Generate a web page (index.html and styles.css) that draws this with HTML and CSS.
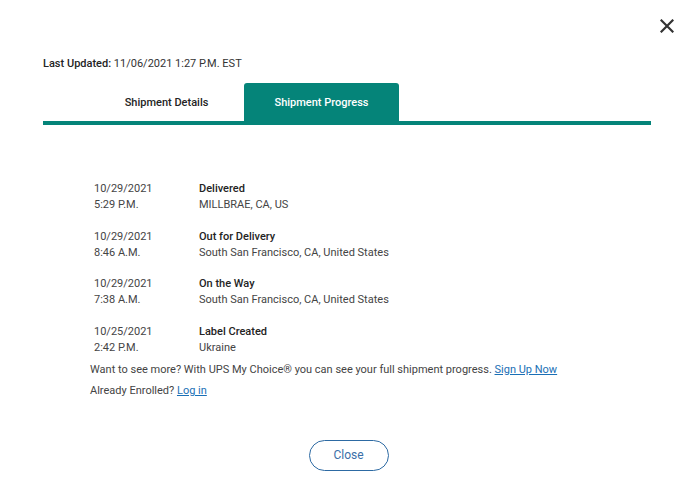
FILE: index.html
```html
<!DOCTYPE html>
<html>
<head>
<meta charset="utf-8">
<link rel="stylesheet" href="styles.css">
</head>
<body>
<div class="modal">
  <div class="top">
    <button class="x" aria-label="Close">
      <svg width="14" height="14" viewBox="0 0 14 14"><path d="M1.5 1.5L12.5 12.5M12.5 1.5L1.5 12.5" stroke="#333" stroke-width="2.2" stroke-linecap="square"/></svg>
    </button>
  </div>
  <div class="updated"><span class="b">Last Updated:</span> 11/06/2021 1:27 P.M. EST</div>
  <div class="tabs">
    <div class="tab">Shipment Details</div>
    <div class="tab active">Shipment Progress</div>
  </div>
  <div class="events">
    <div class="ev"><div class="when">10/29/2021<br>5:29 P.M.</div><div class="what"><span class="b">Delivered</span><br>MILLBRAE, CA, US</div></div>
    <div class="ev"><div class="when">10/29/2021<br>8:46 A.M.</div><div class="what"><span class="b">Out for Delivery</span><br>South San Francisco, CA, United States</div></div>
    <div class="ev"><div class="when">10/29/2021<br>7:38 A.M.</div><div class="what"><span class="b">On the Way</span><br>South San Francisco, CA, United States</div></div>
    <div class="ev"><div class="when">10/25/2021<br>2:42 P.M.</div><div class="what"><span class="b">Label Created</span><br>Ukraine</div></div>
  </div>
  <div class="more">
    <p>Want to see more? With UPS My Choice® you can see your full shipment progress. <a href="#">Sign Up Now</a></p>
    <p>Already Enrolled? <a href="#">Log in</a></p>
  </div>
  <div class="foot"><button class="close">Close</button></div>
</div>
</body>
</html>
```
FILE: styles.css
```css
* { box-sizing: border-box; }
body { margin: 0; background: #fff; font-family: Roboto, "Liberation Sans", sans-serif; color: #333; font-size: 11px; }
.modal { width: 697px; height: 500px; padding: 0 46px 0 43px; }
.top { display: flex; justify-content: flex-end; padding-top: 19px; height: 56px; margin-right: -23px; }
.x { border: 0; background: none; padding: 0; width: 14px; height: 14px; cursor: pointer; display: block; }
.x svg { display: block; }
.updated { line-height: 16px; height: 16px; color: #333; }
.b { font-weight: 500; color: #242424; }
.tabs { display: flex; margin-top: 11px; padding-left: 46px; border-bottom: 4px solid #058479; }
.tab { width: 155px; height: 38px; display: flex; align-items: center; justify-content: center; font-weight: 500; color: #242424; }
.tab.active { background: #058479; color: #fff; border-radius: 3px 3px 0 0; }
.events { padding: 56px 0 0 51px; display: flex; flex-direction: column; gap: 15.6px; }
.ev { display: flex; line-height: 16px; }
.when { width: 105px; color: #444; }
.what { color: #444; }
.more { padding: 3px 0 0 47px; color: #444; }
.more p { margin: 0; line-height: 21px; }
.more a { color: #1a6fb5; text-decoration: underline; }
.foot { display: flex; justify-content: center; padding-top: 39px; padding-left: 3px; }
.close { width: 80px; height: 31px; border: 1.5px solid #2d6aa3; border-radius: 16px; background: #fff; color: #3b6fa8; font-family: Roboto, "Liberation Sans", sans-serif; font-size: 12px; cursor: pointer; }
```
